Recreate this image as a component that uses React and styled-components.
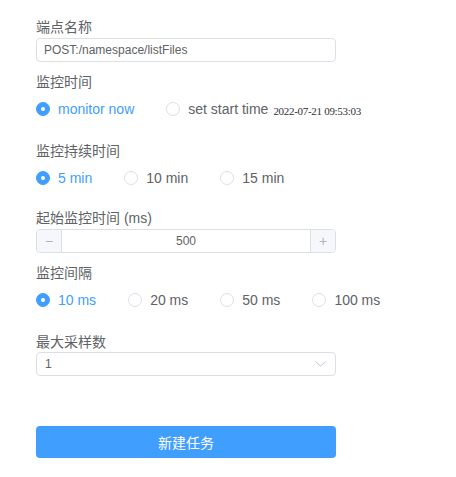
// Imports
import React, { useState } from 'react';
import styled, { createGlobalStyle } from 'styled-components';

// Global
const GlobalStyle = createGlobalStyle`
	html, body {
		margin: 0;
		padding: 0;
		background: #ffffff;
	}
	body {
		font-family: "Liberation Sans", "Noto Sans CJK SC", sans-serif;
		color: #606266;
	}
`;

// Data
const durations = ['5 min', '10 min', '15 min'];
const intervals = ['10 ms', '20 ms', '50 ms', '100 ms'];

// Small parts
const RadioGroup = ({ options, value, onChange, children }) => {
	return (
		<Group>
			{
				options.map((option) => {
					return (
						<RadioItem key={ option } onClick={ () => onChange(option) }>
							<Circle $checked={ value === option }/>
							<RadioText $checked={ value === option }>{ option }</RadioText>
						</RadioItem>
					);
				})
			}
			{ children }
		</Group>
	);
};

const Chevron = () => (
	<svg width="11" height="6" viewBox="0 0 11 6" fill="none">
		<path d="M0.5 0.5L5.5 5L10.5 0.5" stroke="#c0c4cc" strokeWidth="1"/>
	</svg>
);

// Component
const App = () => {

	const [mode, setMode] = useState('monitor now');
	const [duration, setDuration] = useState('5 min');
	const [interval, setInterval] = useState('10 ms');
	const [start, setStart] = useState(500);

	return (
		<>
			<GlobalStyle/>
			<Form>
				<Field $gap={ 10 }>
					<Label>端点名称</Label>
					<TextInput>POST:/namespace/listFiles</TextInput>
				</Field>

				<Field $gap={ 22 }>
					<Label>监控时间</Label>
					<RadioGroup options={ ['monitor now', 'set start time'] } value={ mode } onChange={ setMode }>
						<DateText>2022-07-21 09:53:03</DateText>
					</RadioGroup>
				</Field>

				<Field $gap={ 20 }>
					<Label>监控持续时间</Label>
					<RadioGroup options={ durations } value={ duration } onChange={ setDuration }/>
				</Field>

				<Field $gap={ 10 }>
					<Label>起始监控时间 (ms)</Label>
					<NumberBox>
						<StepButton $side="left" onClick={ () => setStart(start - 1) }>−</StepButton>
						<NumberValue>{ start }</NumberValue>
						<StepButton $side="right" onClick={ () => setStart(start + 1) }>+</StepButton>
					</NumberBox>
				</Field>

				<Field $gap={ 22 }>
					<Label>监控间隔</Label>
					<RadioGroup options={ intervals } value={ interval } onChange={ setInterval }/>
				</Field>

				<Field $gap={ 0 }>
					<Label>最大采样数</Label>
					<SelectBox>
						<span>1</span>
						<Chevron/>
					</SelectBox>
				</Field>

				<SubmitButton>新建任务</SubmitButton>
			</Form>
		</>
	);

};

// Styled
const Form = styled.div`
	width: 300px;
	padding: 17px 0 0 36px;
	display: flex;
	flex-direction: column;
`;

const Field = styled.div`
	display: flex;
	flex-direction: column;
	margin-bottom: ${ (p) => p.$gap }px;
`;

const Label = styled.div`
	font-size: 14px;
	line-height: 20px;
	color: #606266;
`;

const TextInput = styled.div`
	box-sizing: border-box;
	height: 24px;
	margin-top: 1px;
	padding: 0 8px 0 7px;
	display: flex;
	align-items: center;
	border: 1px solid #dcdfe6;
	border-radius: 4px;
	font-size: 12px;
	color: #606266;
`;

const SelectBox = styled(TextInput)`
	margin-top: 0;
	padding: 0 9px 0 8px;
	justify-content: space-between;
`;

const Group = styled.div`
	display: flex;
	align-items: center;
	height: 20px;
	margin-top: 7px;
	white-space: nowrap;
`;

const RadioItem = styled.label`
	display: flex;
	flex-shrink: 0;
	align-items: center;
	margin-right: 32px;
	cursor: pointer;
	font-size: 14px;
	&:last-of-type {
		margin-right: 5px;
	}
`;

const Circle = styled.span`
	box-sizing: border-box;
	flex-shrink: 0;
	width: 14px;
	height: 14px;
	border-radius: 50%;
	border: 1px solid ${ (p) => p.$checked ? '#409eff' : '#dcdfe6' };
	background: ${ (p) => p.$checked ? '#409eff' : '#ffffff' };
	display: flex;
	align-items: center;
	justify-content: center;
	margin-right: 8px;
	&::after {
		content: '';
		width: 4px;
		height: 4px;
		border-radius: 50%;
		background: #ffffff;
		display: ${ (p) => p.$checked ? 'block' : 'none' };
	}
`;

const RadioText = styled.span`
	color: ${ (p) => p.$checked ? '#409eff' : '#606266' };
	line-height: 20px;
`;

const DateText = styled.span`
	flex-shrink: 0;
	font-family: "Liberation Serif", serif;
	font-size: 11px;
	letter-spacing: -0.3px;
	color: #303133;
	padding-top: 3px;
`;

const NumberBox = styled.div`
	box-sizing: border-box;
	height: 24px;
	margin-top: 1px;
	display: flex;
	border: 1px solid #dcdfe6;
	border-radius: 4px;
	overflow: hidden;
`;

const StepButton = styled.button`
	width: 25px;
	padding: 0;
	border: none;
	${ (p) => p.$side === 'left' ? 'border-right' : 'border-left' }: 1px solid #dcdfe6;
	background: #f5f7fa;
	color: #b0b4bc;
	font-family: "Liberation Sans", sans-serif;
	font-size: 14px;
	line-height: 22px;
	cursor: pointer;
`;

const NumberValue = styled.div`
	flex: 1;
	display: flex;
	align-items: center;
	justify-content: center;
	font-size: 12px;
	color: #606266;
`;

const SubmitButton = styled.button`
	margin-top: 50px;
	height: 32px;
	width: 300px;
	border: none;
	border-radius: 4px;
	background: #409eff;
	color: #ffffff;
	font-family: "Liberation Sans", "Noto Sans CJK SC", sans-serif;
	font-size: 14px;
	cursor: pointer;
`;

// Export
export default App;
